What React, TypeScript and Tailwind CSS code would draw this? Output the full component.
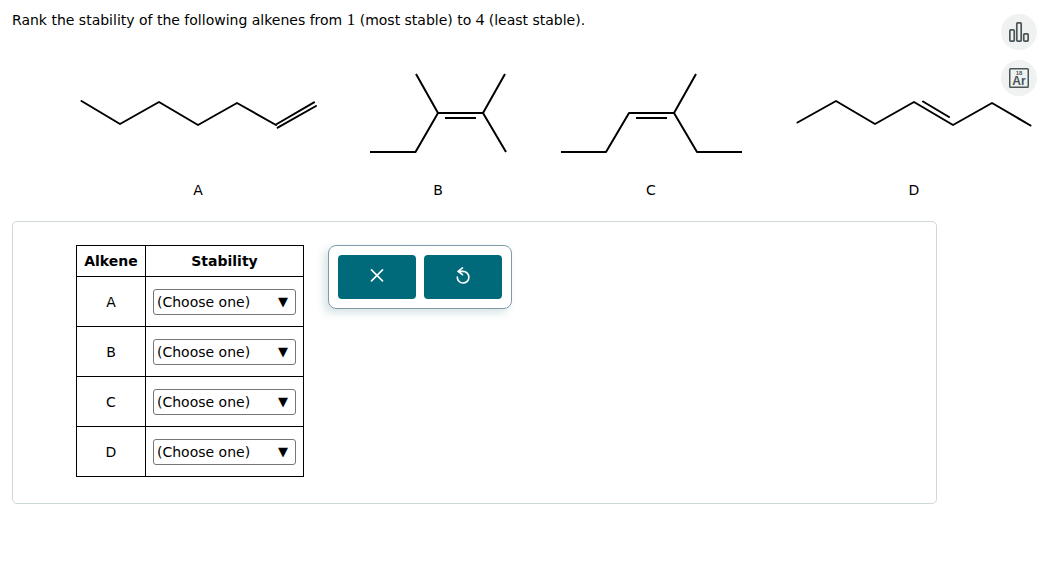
import { useState } from "react";
import type { ReactNode } from "react";

type Choices = Record<string, string>;

const ALKENES = ["A", "B", "C", "D"];
const EMPTY: Choices = { A: "", B: "", C: "", D: "" };

function Structure({ label, width, children }: { label: string; width: number; children: ReactNode }) {
  return (
    <figure className="flex shrink-0 flex-col items-center gap-3">
      <svg
        width={width}
        height="104"
        viewBox={`0 0 ${width} 104`}
        fill="none"
        stroke="#000"
        strokeWidth="2"
        strokeLinejoin="round"
        strokeLinecap="round"
        role="img"
        aria-label={`Alkene ${label}`}
      >
        {children}
      </svg>
      <figcaption className="leading-5">{label}</figcaption>
    </figure>
  );
}

function StabilitySelect({ id, value, onChange }: { id: string; value: string; onChange: (v: string) => void }) {
  return (
    <div className="relative">
      <select
        id={id}
        value={value}
        onChange={(e) => onChange(e.target.value)}
        className="block h-[26px] w-[143px] appearance-none rounded-[3px] border border-[#767676] bg-white pl-[3px] pr-6 pt-px text-black"
      >
        <option value="">(Choose one)</option>
        <option value="1">1 (most stable)</option>
        <option value="2">2</option>
        <option value="3">3</option>
        <option value="4">4 (least stable)</option>
      </select>
      <span aria-hidden="true" className="pointer-events-none absolute inset-y-0 right-2 flex items-center text-[13px]">
        ▼
      </span>
    </div>
  );
}

export default function App() {
  const [choices, setChoices] = useState<Choices>(EMPTY);

  return (
    <div className="relative bg-white font-['Verdana','DejaVu_Sans',sans-serif] text-[14px] text-black">
      <nav className="absolute right-3.5 top-3.5 z-10 flex flex-col gap-2.5">
        <button type="button" aria-label="Data" className="flex size-9 items-center justify-center rounded-full bg-[#f0f2f2]">
          <svg width="20" height="20" viewBox="0 0 20 20" fill="none" stroke="#4a5658" strokeWidth="1.7">
            <rect x="0.85" y="7.85" width="4.4" height="11.3" rx="0.8" />
            <rect x="7.8" y="0.85" width="4.4" height="18.3" rx="0.8" />
            <rect x="14.75" y="11.85" width="4.4" height="7.3" rx="0.8" />
          </svg>
        </button>
        <button type="button" aria-label="Periodic table" className="flex size-9 items-center justify-center rounded-full bg-[#f0f2f2]">
          <svg width="20" height="20" viewBox="0 0 20 20" fill="#4a5658">
            <rect x="0.75" y="0.75" width="18.5" height="18.5" rx="0.8" fill="none" stroke="#4a5658" strokeWidth="1.5" />
            <text x="10" y="7" fontSize="6" textAnchor="middle" fontFamily="Liberation Sans, sans-serif" fontWeight="700">18</text>
            <text x="10" y="17" fontSize="12" textAnchor="middle" fontFamily="Liberation Sans, sans-serif" fontWeight="700">Ar</text>
          </svg>
        </button>
      </nav>

      <p className="pl-3 pt-2.5 leading-5">
        Rank the stability of the following alkenes from{" "}
        <span className="font-['Liberation_Serif',serif] text-[17px]">1</span> (most stable) to{" "}
        <span className="font-['Liberation_Serif',serif] text-[17px]">4</span> (least stable).
      </p>

      <section className="flex gap-12 pl-[76px] pt-[34px]">
        <Structure label="A" width={244}>
          <path d="M5.500 37 44 60 83 38 122 61 161 39 200 61M200 60.500 238 38.300M201.700 63.700 240 42" />
        </Structure>
        <Structure label="B" width={140}>
          <path strokeLinecap="butt" d="M48 10 70 49H115L137 10M70 49 47.500 88H2M115 49 138 88M77 54H108" />
        </Structure>
        <Structure label="C" width={190}>
          <path strokeLinecap="butt" d="M5 88H50L73 49H118L140 10M118 49 141 88H186M80 54H111" />
        </Structure>
        <Structure label="D" width={240}>
          <path d="M3.500 58.500 42 37 81 60 120 38 159 61 198 39 236.500 61.500M129 37.500 155 53" />
        </Structure>
      </section>

      <main className="ml-3 mr-[114px] mt-[21px] flex items-start gap-6 rounded-[5px] border border-[#ced8d7] pb-[26px] pl-[63px] pt-[23px]">
        <table className="border-collapse text-center">
          <thead>
            <tr className="h-[31px]">
              <th className="w-[69px] border border-black p-0">Alkene</th>
              <th className="border border-black p-0">Stability</th>
            </tr>
          </thead>
          <tbody>
            {ALKENES.map((name) => (
              <tr key={name} className="h-[50px]">
                <td className="border border-black px-0 pb-0 pt-0.5">
                  <label htmlFor={`stability-${name}`}>{name}</label>
                </td>
                <td className="border border-black px-[7px] py-0">
                  <StabilitySelect
                    id={`stability-${name}`}
                    value={choices[name]}
                    onChange={(v) => setChoices({ ...choices, [name]: v })}
                  />
                </td>
              </tr>
            ))}
          </tbody>
        </table>

        <div className="flex gap-2 rounded-lg border border-[#7f9ba6] p-[9px] shadow-[-4px_4px_8px_rgba(0,80,100,0.16)]">
          <button
            type="button"
            aria-label="Clear"
            onClick={() => setChoices(EMPTY)}
            className="flex h-11 w-[78px] items-center justify-center rounded bg-[#00697a]"
          >
            <svg width="16" height="16" viewBox="0 0 16 16" fill="none" stroke="#fff" strokeWidth="1.6" strokeLinecap="round">
              <path d="M2.500 0.900 13.500 11.900M13.500 0.900 2.500 11.900" />
            </svg>
          </button>
          <button
            type="button"
            aria-label="Reset"
            onClick={() => setChoices(EMPTY)}
            className="flex h-11 w-[78px] items-center justify-center rounded bg-[#00697a]"
          >
            <svg width="16" height="20" viewBox="0 0 16 20" fill="none" stroke="#fff" strokeWidth="1.6" strokeLinecap="round" strokeLinejoin="round">
              <path d="M2.300 10A5.800 5.800 0 1 0 8 4.400H3M7.500 0.900 3 4.400 7.500 7.700" />
            </svg>
          </button>
        </div>
      </main>
    </div>
  );
}
